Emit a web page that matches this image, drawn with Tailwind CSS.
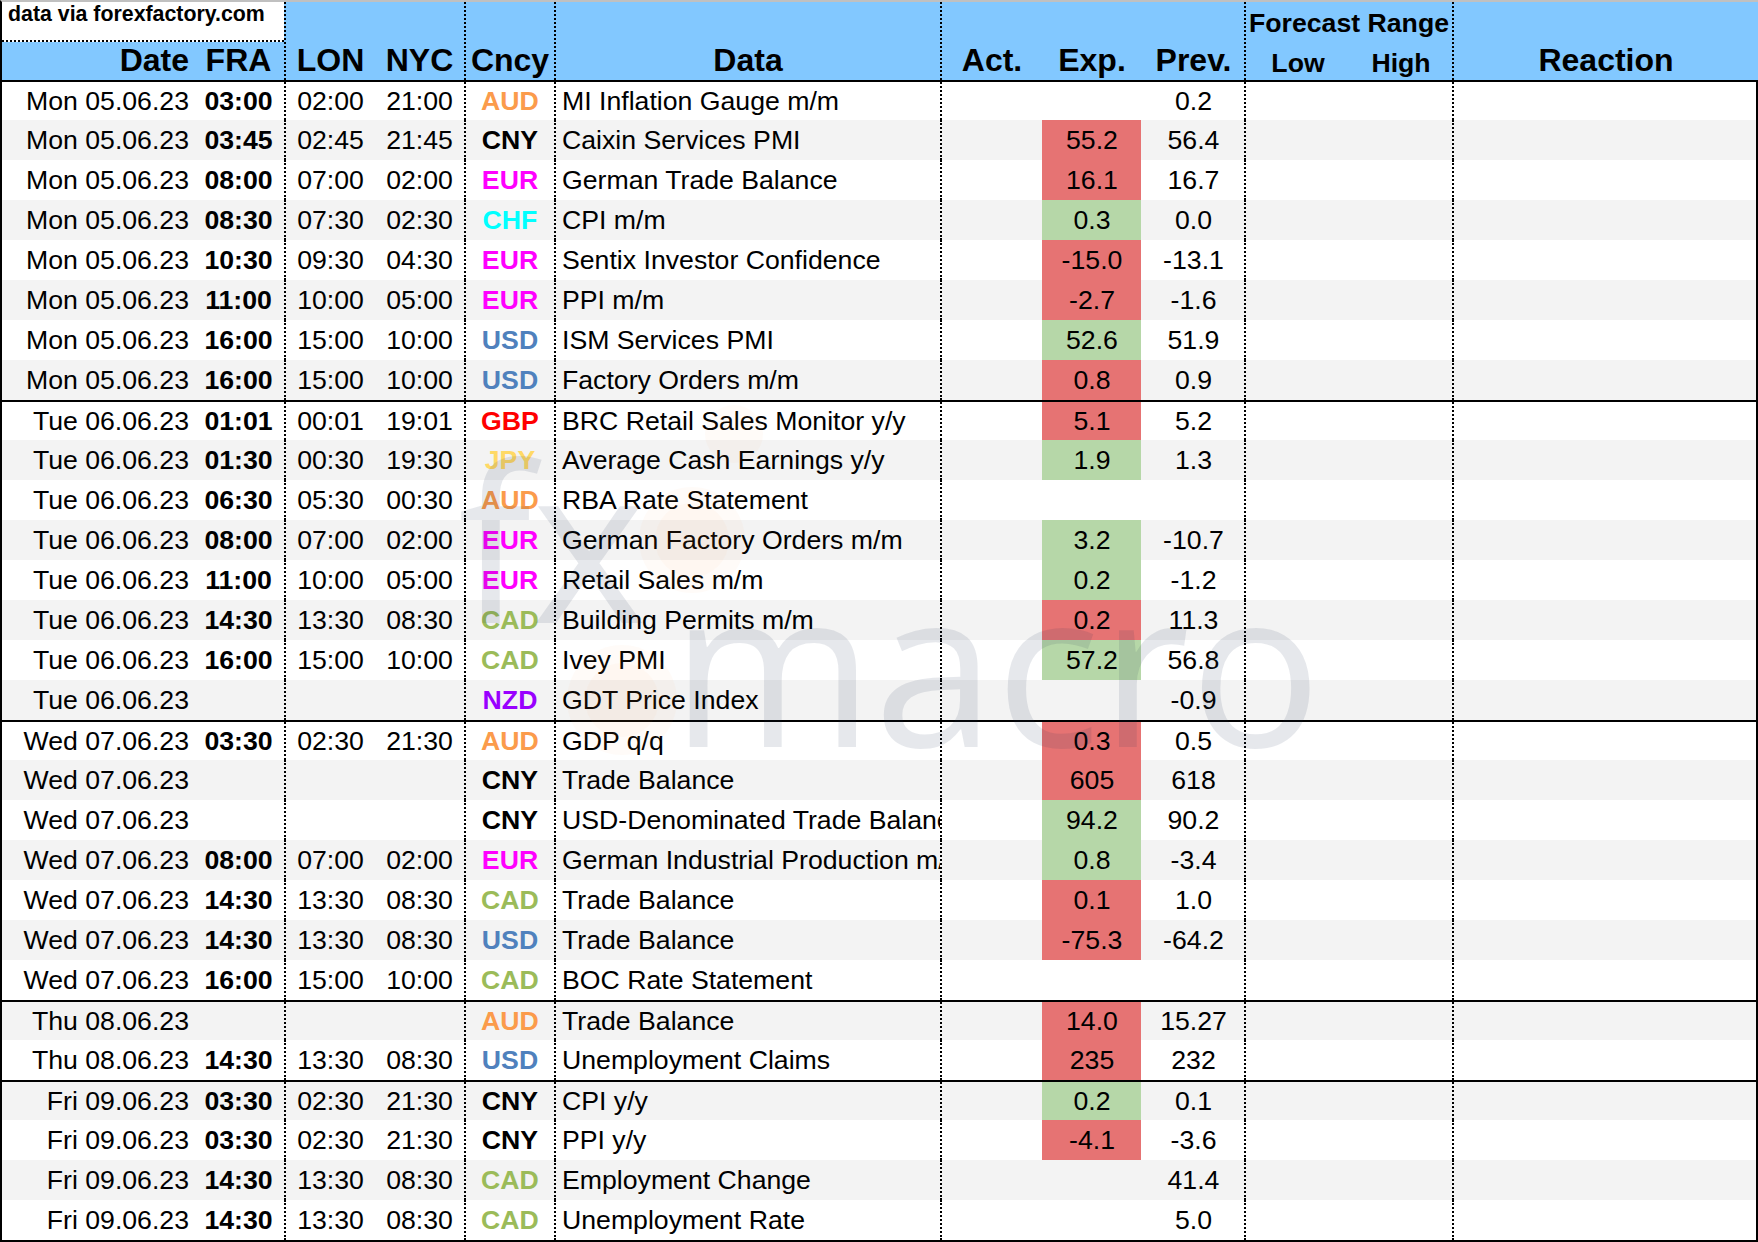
<!DOCTYPE html>
<html lang="en">
<head>
    <meta charset="UTF-8">
    <title>Weekly Calendar</title>
    <script src="https://cdn.jsdelivr.net/npm/@tailwindcss/browser@4"></script>
</head>
<body class="bg-white">
    <div class="relative w-[1758px] h-[1242px] overflow-hidden font-['Liberation_Sans',Arial,sans-serif] text-black text-[26.67px] leading-none">

        <!-- Header -->
        <div class="h-20 border-t-2 border-t-[#c0c0c0] border-l-2 border-l-black bg-[#82c8ff] grid grid-cols-[282px_91px_89px_90px_386px_102px_99px_103px_208px_306px] font-bold text-[32px]">
            <div class="flex flex-col">
                <div class="h-10 bg-white border-b-2 border-dotted border-black pl-1.5 pt-0.5 text-[21.33px]">data via forexfactory.com</div>
                <div class="flex-1 grid grid-cols-[193px_89px] items-end pb-1">
                    <div class="text-right pr-1.5">Date</div>
                    <div class="text-center pr-0.5">FRA</div>
                </div>
            </div>
            <div class="border-l-2 border-dotted border-black flex items-end justify-center pb-1">LON</div>
            <div class="flex items-end justify-center pb-1">NYC</div>
            <div class="border-l-2 border-dotted border-black flex items-end justify-center pb-1">Cncy</div>
            <div class="border-l-2 border-dotted border-black flex items-end justify-center pb-1">Data</div>
            <div class="border-l-2 border-dotted border-black flex items-end justify-center pb-1">Act.</div>
            <div class="flex items-end justify-center pb-1 pl-px">Exp.</div>
            <div class="flex items-end justify-center pb-1 pl-0.5">Prev.</div>
            <div class="border-l-2 border-dotted border-black flex flex-col text-[26.67px]">
                <div class="flex-1 text-center pt-2">Forecast Range</div>
                <div class="grid grid-cols-[104px_102px] text-center pb-[3px]">
                    <div>Low</div>
                    <div>High</div>
                </div>
            </div>
            <div class="border-l-2 border-dotted border-black flex items-end justify-center pb-1">Reaction</div>
        </div>

        <!-- Rows -->
        <div id="rows" class="border-x-2 border-b-2 border-black"></div>

        <!-- Watermark -->
        <div class="absolute inset-0 pointer-events-none">
            <svg class="absolute inset-0" width="1758" height="1242">
                <circle cx="692" cy="540" r="53" fill="#f79646" fill-opacity="0.04"></circle>
                <circle cx="692" cy="540" r="37" fill="#f79646" fill-opacity="0.04"></circle>
                <circle cx="622" cy="700" r="55" fill="#f79646" fill-opacity="0.04"></circle>
                <circle cx="622" cy="700" r="37" fill="#f79646" fill-opacity="0.04"></circle>
                <circle cx="734" cy="434" r="29" fill="#f79646" fill-opacity="0.04"></circle>
            </svg>
            <span class="absolute left-[458px] top-[388px] font-['Open_Sans'] text-[219px] leading-[300px] text-[#1e2a50]/11">fx</span>
            <span class="absolute left-[671px] top-[512px] font-['Open_Sans'] text-[219px] leading-[300px] text-[#1e2a50]/11">macro</span>
        </div>
    </div>

    <script>
        const cur = {
            AUD: 'text-[#fb9b4b]', CNY: 'text-black', EUR: 'text-[#ff00ff]', CHF: 'text-[#00ffff]',
            USD: 'text-[#4f81bd]', GBP: 'text-[#ff0000]', JPY: 'text-[#ffd966]', CAD: 'text-[#9bbb59]', NZD: 'text-[#9900ff]'
        };

        // date, fra, lon, nyc, cncy, data, exp, prev, r/g, first row of a day
        const data = [
            ['Mon 05.06.23','03:00','02:00','21:00','AUD','MI Inflation Gauge m/m','','0.2','',1],
            ['Mon 05.06.23','03:45','02:45','21:45','CNY','Caixin Services PMI','55.2','56.4','r'],
            ['Mon 05.06.23','08:00','07:00','02:00','EUR','German Trade Balance','16.1','16.7','r'],
            ['Mon 05.06.23','08:30','07:30','02:30','CHF','CPI m/m','0.3','0.0','g'],
            ['Mon 05.06.23','10:30','09:30','04:30','EUR','Sentix Investor Confidence','-15.0','-13.1','r'],
            ['Mon 05.06.23','11:00','10:00','05:00','EUR','PPI m/m','-2.7','-1.6','r'],
            ['Mon 05.06.23','16:00','15:00','10:00','USD','ISM Services PMI','52.6','51.9','g'],
            ['Mon 05.06.23','16:00','15:00','10:00','USD','Factory Orders m/m','0.8','0.9','r'],
            ['Tue 06.06.23','01:01','00:01','19:01','GBP','BRC Retail Sales Monitor y/y','5.1','5.2','r',1],
            ['Tue 06.06.23','01:30','00:30','19:30','JPY','Average Cash Earnings y/y','1.9','1.3','g'],
            ['Tue 06.06.23','06:30','05:30','00:30','AUD','RBA Rate Statement','','',''],
            ['Tue 06.06.23','08:00','07:00','02:00','EUR','German Factory Orders m/m','3.2','-10.7','g'],
            ['Tue 06.06.23','11:00','10:00','05:00','EUR','Retail Sales m/m','0.2','-1.2','g'],
            ['Tue 06.06.23','14:30','13:30','08:30','CAD','Building Permits m/m','0.2','11.3','r'],
            ['Tue 06.06.23','16:00','15:00','10:00','CAD','Ivey PMI','57.2','56.8','g'],
            ['Tue 06.06.23','','','','NZD','GDT Price Index','','-0.9',''],
            ['Wed 07.06.23','03:30','02:30','21:30','AUD','GDP q/q','0.3','0.5','r',1],
            ['Wed 07.06.23','','','','CNY','Trade Balance','605','618','r'],
            ['Wed 07.06.23','','','','CNY','USD-Denominated Trade Balance','94.2','90.2','g'],
            ['Wed 07.06.23','08:00','07:00','02:00','EUR','German Industrial Production m/m','0.8','-3.4','g'],
            ['Wed 07.06.23','14:30','13:30','08:30','CAD','Trade Balance','0.1','1.0','r'],
            ['Wed 07.06.23','14:30','13:30','08:30','USD','Trade Balance','-75.3','-64.2','r'],
            ['Wed 07.06.23','16:00','15:00','10:00','CAD','BOC Rate Statement','','',''],
            ['Thu 08.06.23','','','','AUD','Trade Balance','14.0','15.27','r',1],
            ['Thu 08.06.23','14:30','13:30','08:30','USD','Unemployment Claims','235','232','r'],
            ['Fri 09.06.23','03:30','02:30','21:30','CNY','CPI y/y','0.2','0.1','g',1],
            ['Fri 09.06.23','03:30','02:30','21:30','CNY','PPI y/y','-4.1','-3.6','r'],
            ['Fri 09.06.23','14:30','13:30','08:30','CAD','Employment Change','','41.4',''],
            ['Fri 09.06.23','14:30','13:30','08:30','CAD','Unemployment Rate','','5.0','']
        ];

        const line = 'border-l-2 border-dotted border-black';
        const mid = 'flex items-center justify-center pt-px';

        document.getElementById('rows').innerHTML = data.map((r, i) => {
            const bg = i % 2 ? 'bg-[#f3f3f3]' : 'bg-white';
            const top = r[9] ? 'border-t-2 border-black' : '';
            const fill = r[8] === 'r' ? 'bg-[#e67373]' : r[8] === 'g' ? 'bg-[#b6d7a8]' : '';
            return `
            <div class="grid grid-cols-[193px_89px_91px_89px_90px_386px_102px_99px_103px_106px_102px_304px] h-10 ${bg} ${top}">
                <div class="flex items-center justify-end pt-px pr-1.5">${r[0]}</div>
                <div class="${mid} pr-0.5 font-bold">${r[1]}</div>
                <div class="${mid} ${line}">${r[2]}</div>
                <div class="${mid}">${r[3]}</div>
                <div class="${mid} ${line} font-bold ${cur[r[4]]}">${r[4]}</div>
                <div class="flex items-center pt-px ${line} pl-1.5 whitespace-nowrap overflow-hidden">${r[5]}</div>
                <div class="${line}"></div>
                <div class="${mid} pl-px ${fill}">${r[6]}</div>
                <div class="${mid} pl-0.5">${r[7]}</div>
                <div class="${line}"></div>
                <div></div>
                <div class="${line}"></div>
            </div>`;
        }).join('');
    </script>
</body>
</html>
